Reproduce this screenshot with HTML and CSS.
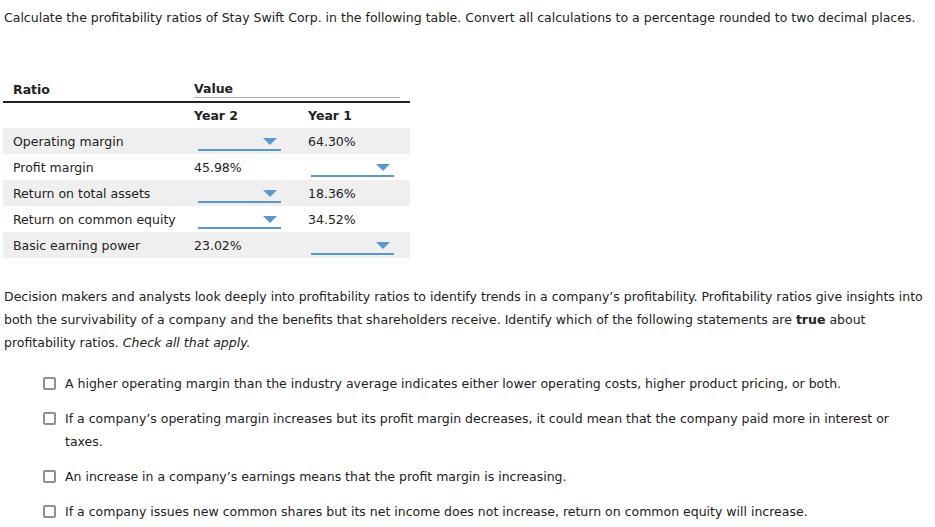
FILE: index.html
```html
<!DOCTYPE html>
<html lang="en">
<head>
    <meta charset="UTF-8">
    <title>Profitability Ratios</title>
    <link rel="stylesheet" href="styles.css">
</head>
<body>
    <div class="question">
        <p class="prompt">Calculate the profitability ratios of Stay Swift Corp. in the following table. Convert all calculations to a percentage rounded to two decimal places.</p>

        <table class="ratio-table">
            <colgroup>
                <col class="col-ratio">
                <col class="col-year2">
                <col class="col-year1">
            </colgroup>
            <thead>
                <tr class="head-main">
                    <th>Ratio</th>
                    <th colspan="2" class="value-head"><span>Value</span></th>
                </tr>
                <tr class="head-sub">
                    <th></th>
                    <th>Year 2</th>
                    <th>Year 1</th>
                </tr>
            </thead>
            <tbody>
                <tr class="shaded">
                    <td>Operating margin</td>
                    <td><span class="select"></span></td>
                    <td>64.30%</td>
                </tr>
                <tr>
                    <td>Profit margin</td>
                    <td>45.98%</td>
                    <td><span class="select"></span></td>
                </tr>
                <tr class="shaded">
                    <td>Return on total assets</td>
                    <td><span class="select"></span></td>
                    <td>18.36%</td>
                </tr>
                <tr>
                    <td>Return on common equity</td>
                    <td><span class="select"></span></td>
                    <td>34.52%</td>
                </tr>
                <tr class="shaded">
                    <td>Basic earning power</td>
                    <td>23.02%</td>
                    <td><span class="select"></span></td>
                </tr>
            </tbody>
        </table>

        <p class="intro">Decision makers and analysts look deeply into profitability ratios to identify trends in a company’s profitability. Profitability ratios give insights into both the survivability of a company and the benefits that shareholders receive. Identify which of the following statements are <b>true</b> about profitability ratios. <i>Check all that apply.</i></p>

        <ul class="choices">
            <li><span class="checkbox"></span><span>A higher operating margin than the industry average indicates either lower operating costs, higher product pricing, or both.</span></li>
            <li><span class="checkbox"></span><span>If a company’s operating margin increases but its profit margin decreases, it could mean that the company paid more in interest or taxes.</span></li>
            <li><span class="checkbox"></span><span>An increase in a company’s earnings means that the profit margin is increasing.</span></li>
            <li><span class="checkbox"></span><span>If a company issues new common shares but its net income does not increase, return on common equity will increase.</span></li>
        </ul>
    </div>
</body>
</html>
```

FILE: styles.css
```css
body {
    margin: 0;
    padding: 0;
    background-color: #fff;
    color: #222;
    font-family: "DejaVu Sans", sans-serif;
    font-size: 12.5px;
}

.question {
    padding: 0 4px;
}

.prompt {
    margin: 6px 0 0;
    line-height: 23px;
}

/* Ratio table */
.ratio-table {
    margin-top: 52px;
    margin-left: -1px;
    border-collapse: collapse;
    table-layout: fixed;
    width: 407px;
}

.col-ratio { width: 187px; }
.col-year2 { width: 114px; }
.col-year1 { width: 106px; }

.ratio-table th {
    text-align: left;
    font-weight: bold;
}

.head-main th {
    padding: 0 0 3px 10px;
    line-height: 16px;
    vertical-align: bottom;
    border-bottom: 2px solid #222;
}

.head-main .value-head {
    padding: 0 10px 3px 4px;
}

.value-head span {
    display: block;
    border-bottom: 1px solid #aaa;
}

.head-sub th {
    height: 25px;
    padding: 0 4px;
}

.ratio-table td {
    height: 26px;
    padding: 0 4px;
    vertical-align: middle;
}

.ratio-table td:first-child {
    padding-left: 10px;
}

.ratio-table tr.shaded td {
    background-color: #efefef;
}

.select {
    display: flex;
    justify-content: flex-end;
    align-items: center;
    box-sizing: border-box;
    width: 83px;
    height: 17px;
    margin: 6px 0 3px 4px;
    padding-right: 4px;
    border-bottom: 2px solid #5b98cf;
}

.select::after {
    content: "";
    border-left: 7px solid transparent;
    border-right: 7px solid transparent;
    border-top: 7px solid #5b98cf;
}

.ratio-table td:last-child .select {
    margin-left: 3px;
}

/* Statements */
.intro {
    margin: 27px 0 0;
    line-height: 23px;
}

.choices {
    list-style: none;
    margin: 18px 0 0;
    padding: 0 12px 0 39px;
}

.choices li {
    display: flex;
    align-items: flex-start;
    line-height: 23px;
    margin-bottom: 12px;
}

.checkbox {
    flex: none;
    box-sizing: border-box;
    width: 13px;
    height: 13px;
    margin: 5px 9px 0 0;
    border: 2px solid #8e8e9c;
    border-radius: 2px;
    background-color: #fff;
}
```
